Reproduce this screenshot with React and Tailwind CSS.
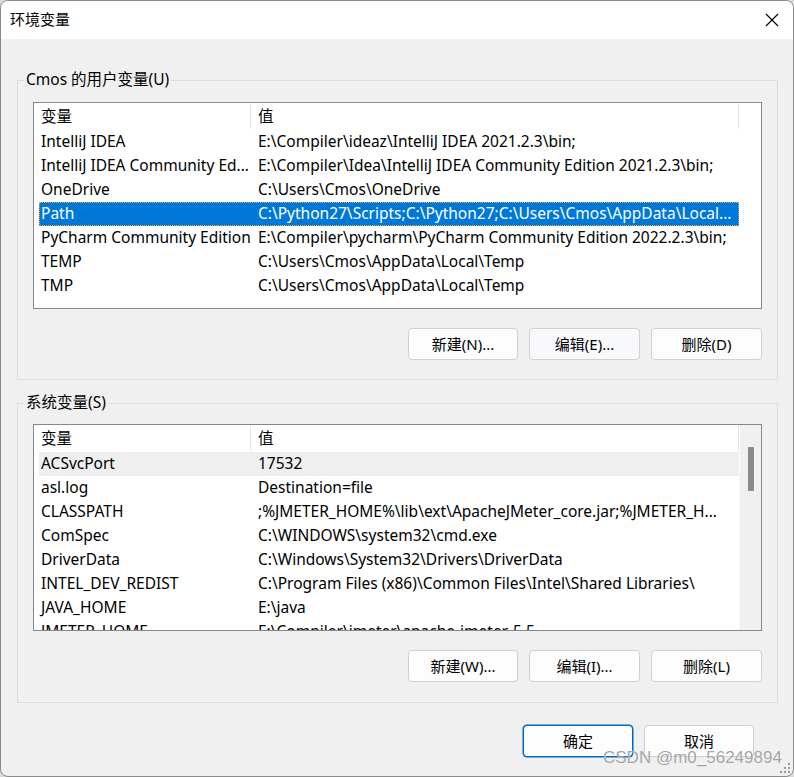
const userVars = [
  ["IntelliJ IDEA", "E:\\Compiler\\ideaz\\IntelliJ IDEA 2021.2.3\\bin;"],
  ["IntelliJ IDEA Community Ed...", "E:\\Compiler\\Idea\\IntelliJ IDEA Community Edition 2021.2.3\\bin;"],
  ["OneDrive", "C:\\Users\\Cmos\\OneDrive"],
  ["Path", "C:\\Python27\\Scripts;C:\\Python27;C:\\Users\\Cmos\\AppData\\Local..."],
  ["PyCharm Community Edition", "E:\\Compiler\\pycharm\\PyCharm Community Edition 2022.2.3\\bin;"],
  ["TEMP", "C:\\Users\\Cmos\\AppData\\Local\\Temp"],
  ["TMP", "C:\\Users\\Cmos\\AppData\\Local\\Temp"],
]

const sysVars = [
  ["ACSvcPort", "17532"],
  ["asl.log", "Destination=file"],
  ["CLASSPATH", ";%JMETER_HOME%\\lib\\ext\\ApacheJMeter_core.jar;%JMETER_H..."],
  ["ComSpec", "C:\\WINDOWS\\system32\\cmd.exe"],
  ["DriverData", "C:\\Windows\\System32\\Drivers\\DriverData"],
  ["INTEL_DEV_REDIST", "C:\\Program Files (x86)\\Common Files\\Intel\\Shared Libraries\\"],
  ["JAVA_HOME", "E:\\java"],
  ["JMETER_HOME", "E:\\Compiler\\jmeter\\apache-jmeter-5.5"],
]

function Row({ name, value, state }) {
  const cls =
    state === "selected"
      ? "bg-[#0078d7] text-white outline-1 outline-dotted outline-[#f3a04c] -outline-offset-1"
      : state === "hover"
        ? "bg-[#efefef]"
        : ""
  return (
    <div className={`grid grid-cols-[212px_488px] shrink-0 h-[24px] leading-[22px] ${cls}`}>
      <div className="pl-[2px] whitespace-nowrap overflow-hidden">{name}</div>
      <div className="pl-[7px] whitespace-nowrap overflow-hidden">{value}</div>
    </div>
  )
}

function VarList({ rows, selected, hover, scroll }) {
  return (
    <div className="flex h-[207px] border border-[#828790] bg-white overflow-hidden">
      <div className="w-[705px] pl-[5px] flex flex-col">
        <div className="grid grid-cols-[212px_488px] h-[27px] shrink-0">
          <div className="pl-[2px] flex items-center border-r border-[#e5e5e5] my-[1px]">变量</div>
          <div className="pl-[7px] flex items-center border-r border-[#e5e5e5] my-[1px]">值</div>
        </div>
        {rows.map(([n, v], i) => (
          <Row key={n} name={n} value={v} state={i === selected ? "selected" : i === hover ? "hover" : ""} />
        ))}
      </div>
      {scroll ? (
        <div className="w-[22px] bg-[#f0f0f0] border-l border-[#fafafa] flex justify-center pt-[22px]">
          <div className="w-[6px] h-[44px] bg-[#8a8a8a] rounded-[1px]" />
        </div>
      ) : (
        <div className="w-[22px]" />
      )}
    </div>
  )
}

function Btn({ children, className = "bg-[#fdfdfd] border-[#d0d0d0]", w = "w-[111px]" }) {
  return (
    <button type="button" className={`${w} h-[32px] rounded-[4px] border text-[15px] leading-[20px] pb-[1px] flex items-center justify-center ${className}`}>
      {children}
    </button>
  )
}

function Group({ title, children, className = "" }) {
  return (
    <fieldset className={`border border-[#dcdcdc] px-[15px] ${className}`}>
      <legend className="-ml-[9px] px-[2px] leading-[18px] pb-[2px]">{title}</legend>
      {children}
    </fieldset>
  )
}

export default function App() {
  return (
    <div className="relative w-[794px] h-[777px] bg-[#d9d9d9] text-[15.5px] text-black font-['Noto_Sans','Noto_Sans_CJK_SC',sans-serif]">
      <div className="flex flex-col w-[794px] h-[777px] border border-[#8a8a8a] rounded-[8px] overflow-hidden bg-[#f0f0f0]">
        <div className="h-[38px] shrink-0 bg-white flex items-center justify-between pl-[9px] pr-[14px]">
          <span className="text-[15px] pb-[1px]">环境变量</span>
          <svg width="14" height="14" viewBox="0 0 14 14" className="text-black">
            <path d="M1 1L13 13M13 1L1 13" stroke="currentColor" strokeWidth="1.1" />
          </svg>
        </div>
        <div className="flex-1 flex flex-col pl-[16px] pr-[15px]">
          <Group title="Cmos 的用户变量(U)" className="mt-[31px] pt-[12px] pb-[19px]">
            <VarList rows={userVars} selected={3} />
            <div className="flex justify-end gap-[11px] mt-[19px]">
              <Btn w="w-[110px]">新建(N)...</Btn>
              <Btn className="bg-[#f7f9fc] border-[#d0d0d0]">编辑(E)...</Btn>
              <Btn>删除(D)</Btn>
            </div>
          </Group>
          <Group title="系统变量(S)" className="mt-[13px] pt-[11px] pb-[20px]">
            <VarList rows={sysVars} hover={0} scroll />
            <div className="flex justify-end gap-[11px] mt-[19px]">
              <Btn w="w-[110px]">新建(W)...</Btn>
              <Btn>编辑(I)...</Btn>
              <Btn>删除(L)</Btn>
            </div>
          </Group>
          <div className="flex justify-end gap-[11px] mt-[22px] pr-[24px]">
            <Btn w="w-[110px]" className="bg-[#fdfdfd] border-[#0067c0] shadow-[0_0_0_0.5px_#0067c0]">确定</Btn>
            <Btn w="w-[110px]">取消</Btn>
          </div>
        </div>
      </div>
      <div className="absolute left-[603px] top-[749px] text-[17px] leading-none text-[#8c8c8c]/80 [text-shadow:0_0_1px_#fff] font-['Liberation_Sans',sans-serif] pointer-events-none">
        CSDN @m0_56249894
      </div>
      <svg className="absolute right-[3px] bottom-[3px]" width="11" height="11" viewBox="0 0 11 11">
        <g fill="#9a9a9a">
          <rect x="8" y="0" width="2" height="2" />
          <rect x="4" y="4" width="2" height="2" />
          <rect x="8" y="4" width="2" height="2" />
          <rect x="0" y="8" width="2" height="2" />
          <rect x="4" y="8" width="2" height="2" />
          <rect x="8" y="8" width="2" height="2" />
        </g>
      </svg>
    </div>
  )
}
